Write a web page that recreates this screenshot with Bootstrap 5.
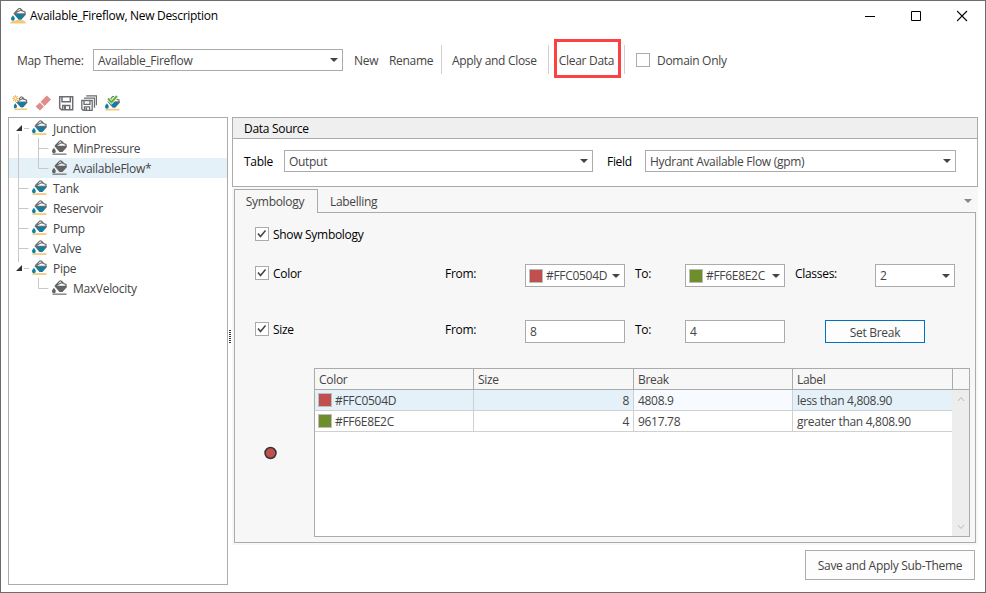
<!DOCTYPE html>
<html lang="en">
<head>
<meta charset="utf-8">
<title>Available_Fireflow, New Description</title>
<link href="https://cdn.jsdelivr.net/npm/bootstrap@5.3.0/dist/css/bootstrap.min.css" rel="stylesheet">
<style>
:root{--line:#ababab;--ink:#444;--sel:#e5f1f9}
body{font:12px/16px "Open Sans","Noto Sans",sans-serif;letter-spacing:-.3px;color:var(--ink);background:#fff;overflow:hidden}
svg{display:block;flex:none}
.win{width:986px;height:593px;border:1px solid #6d6d6d}
.title-bar{height:30px;padding:0 16px 0 9px;color:#000}
.win-ctl{gap:34px;margin-top:-1px}
.tool-row{height:57px;padding-left:16px}
.tool-row span{padding-top:3px}
.tool-row .vr-line{width:1px;height:29px;background:#d0d0d0}
.box{border:1px solid var(--line);background:#fff;height:22px;padding:0 4px}
.box.tall{height:23px}
.caret{width:0;height:0;border:4px solid transparent;border-top-color:#444;border-bottom:0;flex:none;margin-left:auto}
.hot{border:3px solid #fb4141;width:67px;height:39px;padding-right:2px;margin:-2px 3px 0 5px}
.hot span{padding-top:5px}
.tick{width:14px;height:14px;border:1px solid var(--line);background:#fff;flex:none}
.icon-row{height:29px;padding-left:11px;gap:7px}
.tree{width:220px;height:468px;border:1px solid var(--line);background:#fff;margin-left:7px}
.tree-item{height:20px}
.tree-item.on{background:var(--sel)}
.tree-item span{padding:2px 0 0 5px}
.splitter{width:4px;padding-top:213px}
.right-pane{width:746px}
.pane-bg{background:#f7f7f7;height:428px}
.source{border:1px solid var(--line);height:70px;background:#fff}
.source-head{height:21px;background:#efefef;border-bottom:1px solid var(--line);padding:2px 0 0 11px;color:#000}
.source-row{height:44px;padding-left:11px;color:#000}
.source-row span{padding-top:2px}
.tabs{height:25px;padding:2px 0 0 2px}
.tab-on{width:84px;border:1px solid var(--line);border-bottom:0;height:24px;margin-bottom:-1px;background:#f7f7f7;position:relative;padding:1px 2px 0 0}
.tab-body{width:742px;height:331px;margin-left:2px;border:1px solid var(--line);padding:14px 0 0 20px}
.set-grid{display:grid;grid-template-columns:190px 80px 110px 50px 110px 80px 80px;color:#000;align-items:start;height:23px}
.set-grid .box{width:100%;color:var(--ink)}
.set-grid>span{padding-top:2px}
.opt{height:18px}
.opt span{padding:2px 0 0 4px}
.set-grid .box.w100{width:100px}
.brk{grid-column:6/8;margin-left:30px;width:100px;height:23px;border:1px solid #0072c6;background:#fdfdfd;color:var(--ink);padding-top:2px}
.sw{width:14px;height:14px;border:1px solid #bdbdbd;flex:none;margin-left:-1px}
.red{background:#c0504d}.green{background:#6e8e2c}
.preview{width:59px;padding:78px 0 0 9px}
.grid-box{width:656px;height:169px;border:1px solid var(--line);background:#fff}
.g-row{display:grid;grid-template-columns:159px 160px 159px 160px 16px;height:21px}
.g-head{background:#f7f7f7;border-bottom:1px solid var(--line)}
.g-row>div{padding:2px 4px 0;border-right:1px solid #d0d0d0;display:flex;align-items:center;white-space:nowrap}
.g-head>div{border-color:var(--line)}
.g-head>div:last-child{border:0}
.g-data{display:grid;grid-template-columns:159px 160px 159px 159px;height:21px;border-bottom:1px solid #d0d0d0}
.g-data>div{padding:0 4px;border-right:1px solid #d0d0d0;display:flex;align-items:center;white-space:nowrap}
.g-data span{padding-top:2px}
.g-data>div:last-child{border:0}
.g-data.on{background:var(--sel)}
.scroll{width:17px;background:#ededed;padding:6px 0}
.save{width:170px;height:30px;border:1px solid var(--line);background:#fdfdfd;margin:5px 3px 0 auto;padding-top:2px}
</style>
</head>
<body>
<svg width="0" height="0" class="position-absolute">
 <symbol id="pot" viewBox="0 0 16 16">
  <path d="M3.500 5.500 7.700 1.200Q8.500.4 9.400 1.200L11.500 3.200M5 5 9.500 2.800 14 4.500V7" fill="none" stroke="#6d6e71" stroke-width="1.200"/>
  <path d="M2.300 6 4.500 4.500 6 5.800H14L15 7 10.500 12H7.500z" fill="#6d6e71"/>
  <path d="M4 7h10L10 11.900H8z" fill="#0a80a8"/>
  <path d="M1.900 7.800c.9 1.400 1.900 2.300 1.900 3.500a1.900 1.900 0 0 1-3.800 0c0-1.200 1-2.100 1.900-3.500z" fill="#0a80a8"/>
 </symbol>
 <symbol id="pot-c" viewBox="0 0 16 16"><path d="M.5 13.200h14v1.700H.5z" fill="#f3c978"/><use href="#pot"/></symbol>
 <symbol id="pot-g" viewBox="0 0 16 16">
  <path d="M.5 13.500h14v1.300H.5z" fill="#777"/>
  <path d="M3.500 5.500 7.700 1.200Q8.500.4 9.400 1.200L11.500 3.200M5 5 9.500 2.800 14 4.500V7" fill="none" stroke="#636363" stroke-width="1.200"/>
  <path d="M2.300 6 4.500 4.500 6 5.800H14L15 7 10.500 12H7.500zM1.900 7.800c.9 1.400 1.900 2.300 1.900 3.500a1.900 1.900 0 0 1-3.800 0c0-1.200 1-2.100 1.900-3.500z" fill="#636363"/>
 </symbol>
 <symbol id="ok" viewBox="0 0 14 14"><path d="M3 6.500 5.500 9.500 10.500 3.500" fill="none" stroke="#444" stroke-width="1.500"/></symbol>
</svg>

<div class="win d-flex flex-column">
 <header class="title-bar d-flex align-items-center">
  <svg width="16" height="16" viewBox="0 0 16 16"><path d="M0 15.500c1-2 3-3 5-2.500 2-2 6-2 8-.5 1.500 0 2.500 1.500 3 3z" fill="#f3c978"/><use href="#pot" x="1" y="-.5" width="16" height="16"/></svg>
  <span class="ps-1">Available_Fireflow, New Description</span>
  <div class="win-ctl d-flex ms-auto">
   <svg width="12" height="12"><path d="M0 6.500h10" stroke="#000"/></svg>
   <svg width="12" height="12"><path d="M.5 1.500h9v9h-9z" fill="none" stroke="#000"/></svg>
   <svg width="12" height="12"><path d="M0 1l10 10M10 1 0 11" stroke="#000" stroke-width="1.100"/></svg>
  </div>
 </header>

 <div class="tool-row d-flex align-items-center">
  <span style="width:76px">Map Theme:</span>
  <div class="box d-flex align-items-center" style="width:250px"><span>Available_Fireflow</span><i class="caret"></i></div>
  <span style="width:35px;margin-left:11px">New</span>
  <span style="width:52px">Rename</span>
  <i class="vr-line"></i>
  <span style="width:96px;margin-left:10px">Apply and Close</span>
  <i class="vr-line"></i>
  <div class="hot d-flex align-items-center justify-content-center"><span class="text-nowrap">Clear Data</span></div>
  <i class="vr-line"></i>
  <i class="tick" style="margin:0 7px 0 11px"></i>
  <span>Domain Only</span>
 </div>

 <div class="icon-row d-flex align-items-center">
  <svg width="16" height="16" viewBox="0 0 16 16"><use href="#pot-c" x="1.500" y="1" width="15" height="15"/><circle cx="3.500" cy="3.500" r="3.500" fill="#fff"/><g stroke="#f0b94f" stroke-width="1.100"><path d="M3.500.3v6.400M.3 3.500h6.400M1.200 1.200l4.600 4.600M5.800 1.200 1.200 5.800"/></g><circle cx="3.500" cy="3.500" r="1" fill="#fff"/></svg>
  <svg width="16" height="16" viewBox="0 0 16 16"><path d="M11.800.5 16 4.600 9.600 11 5.500 6.800zM4.800 7.500l4.100 4.200L5 15.600.6 11.500z" fill="#e08c8c"/></svg>
  <svg width="16" height="16" viewBox="0 0 16 16"><path d="M1.700 1.700h13v13H3.400L1.700 13zM4 1.700v5.100h8.300V1.700M4.700 14.700v-4.200h7v4.200" fill="none" stroke="#6d6e71" stroke-width="1.500"/><path d="M6 11h2v3H6z" fill="#6d6e71"/></svg>
  <svg width="16" height="16" viewBox="0 0 16 16"><path d="M.8 5.500h10.400v9.800H2.200L.8 13.900zM3 5.500v3.800h6V5.500M3.400 15.300v-3.500h5.200v3.500M3 3.200h10.500v9.500M5.200.8h10.300v9.500" fill="none" stroke="#6d6e71" stroke-width="1.300"/><path d="M4.500 12.500h1.600v2.500H4.500z" fill="#6d6e71"/></svg>
  <svg width="16" height="16" viewBox="0 0 16 16"><use href="#pot-c" x="1" y=".5" width="16" height="16"/><path d="M4 3.500l3.500 3.700L13 1" fill="none" stroke="#fff" stroke-width="3.400"/><path d="M4 3.500l3.500 3.700L13 1" fill="none" stroke="#5cb531" stroke-width="2"/></svg>
 </div>

 <main class="d-flex">
  <nav class="tree" id="tree"></nav>
  <div class="splitter"><svg width="4" height="14"><path d="M2 0v14" stroke="#333" stroke-width="2" stroke-dasharray="1 1"/></svg></div>
  <section class="right-pane">
   <div class="pane-bg">
    <div class="source">
     <div class="source-head d-flex align-items-center">Data Source</div>
     <div class="source-row d-flex align-items-center">
      <span style="width:40px">Table</span>
      <div class="box d-flex align-items-center" style="width:309px;color:#444"><span>Output</span><i class="caret"></i></div>
      <span style="width:38px;margin-left:14px">Field</span>
      <div class="box d-flex align-items-center" style="width:311px;color:#444"><span>Hydrant Available Flow (gpm)</span><i class="caret"></i></div>
     </div>
    </div>
    <div class="tabs d-flex align-items-center">
     <div class="tab-on d-flex align-items-center justify-content-center align-self-start"><span>Symbology</span></div>
     <span style="margin-left:12px;padding-top:2px">Labelling</span>
     <i class="caret" style="margin-right:6px;border-top-color:#888"></i>
    </div>
    <div class="tab-body">
     <div class="opt d-flex align-items-center text-black" style="height:14px"><i class="tick"><svg width="12" height="12" viewBox="1 1 12 12"><use href="#ok" width="14" height="14"/></svg></i><span>Show Symbology</span></div>
     <div class="set-grid" style="margin-top:23px">
      <div class="opt d-flex align-items-center"><i class="tick"><svg width="12" height="12" viewBox="1 1 12 12"><use href="#ok" width="14" height="14"/></svg></i><span>Color</span></div>
      <span>From:</span>
      <div class="box tall w100 d-flex align-items-center"><i class="sw red"></i><span style="margin-left:3px">#FFC0504D</span><i class="caret"></i></div>
      <span>To:</span>
      <div class="box tall w100 d-flex align-items-center"><i class="sw green"></i><span style="margin-left:3px">#FF6E8E2C</span><i class="caret"></i></div>
      <span>Classes:</span>
      <div class="box tall d-flex align-items-center"><span>2</span><i class="caret"></i></div>
     </div>
     <div class="set-grid" style="margin-top:33px">
      <div class="opt d-flex align-items-center"><i class="tick"><svg width="12" height="12" viewBox="1 1 12 12"><use href="#ok" width="14" height="14"/></svg></i><span>Size</span></div>
      <span>From:</span>
      <div class="box tall w100 d-flex align-items-center">8</div>
      <span>To:</span>
      <div class="box tall w100 d-flex align-items-center">4</div>
      <div class="brk d-flex align-items-center justify-content-center">Set Break</div>
     </div>
     <div class="d-flex" style="margin-top:25px">
      <div class="preview"><svg width="14" height="14"><circle cx="6.500" cy="7" r="5.500" fill="#c0504d" stroke="#333" stroke-width="1.500"/></svg></div>
      <div class="grid-box">
       <div class="g-row g-head"><div>Color</div><div>Size</div><div>Break</div><div>Label</div><div></div></div>
       <div class="d-flex" style="height:146px">
        <div style="width:637px">
         <div class="g-data on"><div><i class="sw red"></i><span style="margin-left:3px">#FFC0504D</span></div><div class="justify-content-end"><span>8</span></div><div style="background:#f7fbff"><span>4808.9</span></div><div><span>less than 4,808.90</span></div></div>
         <div class="g-data"><div><i class="sw green"></i><span style="margin-left:3px">#FF6E8E2C</span></div><div class="justify-content-end"><span>4</span></div><div><span>9617.78</span></div><div><span>greater than 4,808.90</span></div></div>
        </div>
        <div class="scroll d-flex flex-column justify-content-between align-items-center">
         <svg width="8" height="6"><path d="M1 5l3-3.500L7 5" fill="none" stroke="#bbb"/></svg>
         <svg width="8" height="6"><path d="M1 1l3 3.500L7 1" fill="none" stroke="#bbb"/></svg>
        </div>
       </div>
      </div>
     </div>
    </div>
   </div>
   <div class="save d-flex align-items-center justify-content-center">Save and Apply Sub-Theme</div>
  </section>
 </main>
</div>
<script>
// label, level, expanded, selected, last child
const rows=[["Junction",0,1],["MinPressure",1],["AvailableFlow*",1,0,1,1],["Tank",0],["Reservoir",0],["Pump",0],["Valve",0],["Pipe",0,1,0,1],["MaxVelocity",1,0,0,1]];
document.getElementById("tree").innerHTML=rows.map(([t,lv,ex,on,last],i)=>{
 let g="";
 if(lv===0){
  if(ex)g='M15 10.500h5';else g='M9.500 0v20M9.500 10.500h10';
  if(ex&&i===0)g+='M9.500 16v4';
  if(ex&&i>0)g+='M9.500 0v4';
 }else{
  g=(i<7?'M9.500 0v20':'')+(last?'M29.500 0v10.500h10':'M29.500 0v20M29.500 10.500h10');
 }
 const w=lv?43:23;
 const tri=ex?'<path d="M13 7v6H7z" fill="#333"/>':'';
 return `<div class="tree-item d-flex align-items-center ${on?'on':''}"><svg width="${w}" height="20"><path d="${g}" fill="none" stroke="#c8c8c8"/>${tri}</svg><svg width="16" height="16" viewBox="0 0 16 16"><use href="#pot-${lv?'g':'c'}" width="16" height="16"/></svg><span>${t}</span></div>`;
}).join("");
</script>
<script src="https://cdn.jsdelivr.net/npm/bootstrap@5.3.0/dist/js/bootstrap.bundle.min.js"></script>
</body>
</html>
